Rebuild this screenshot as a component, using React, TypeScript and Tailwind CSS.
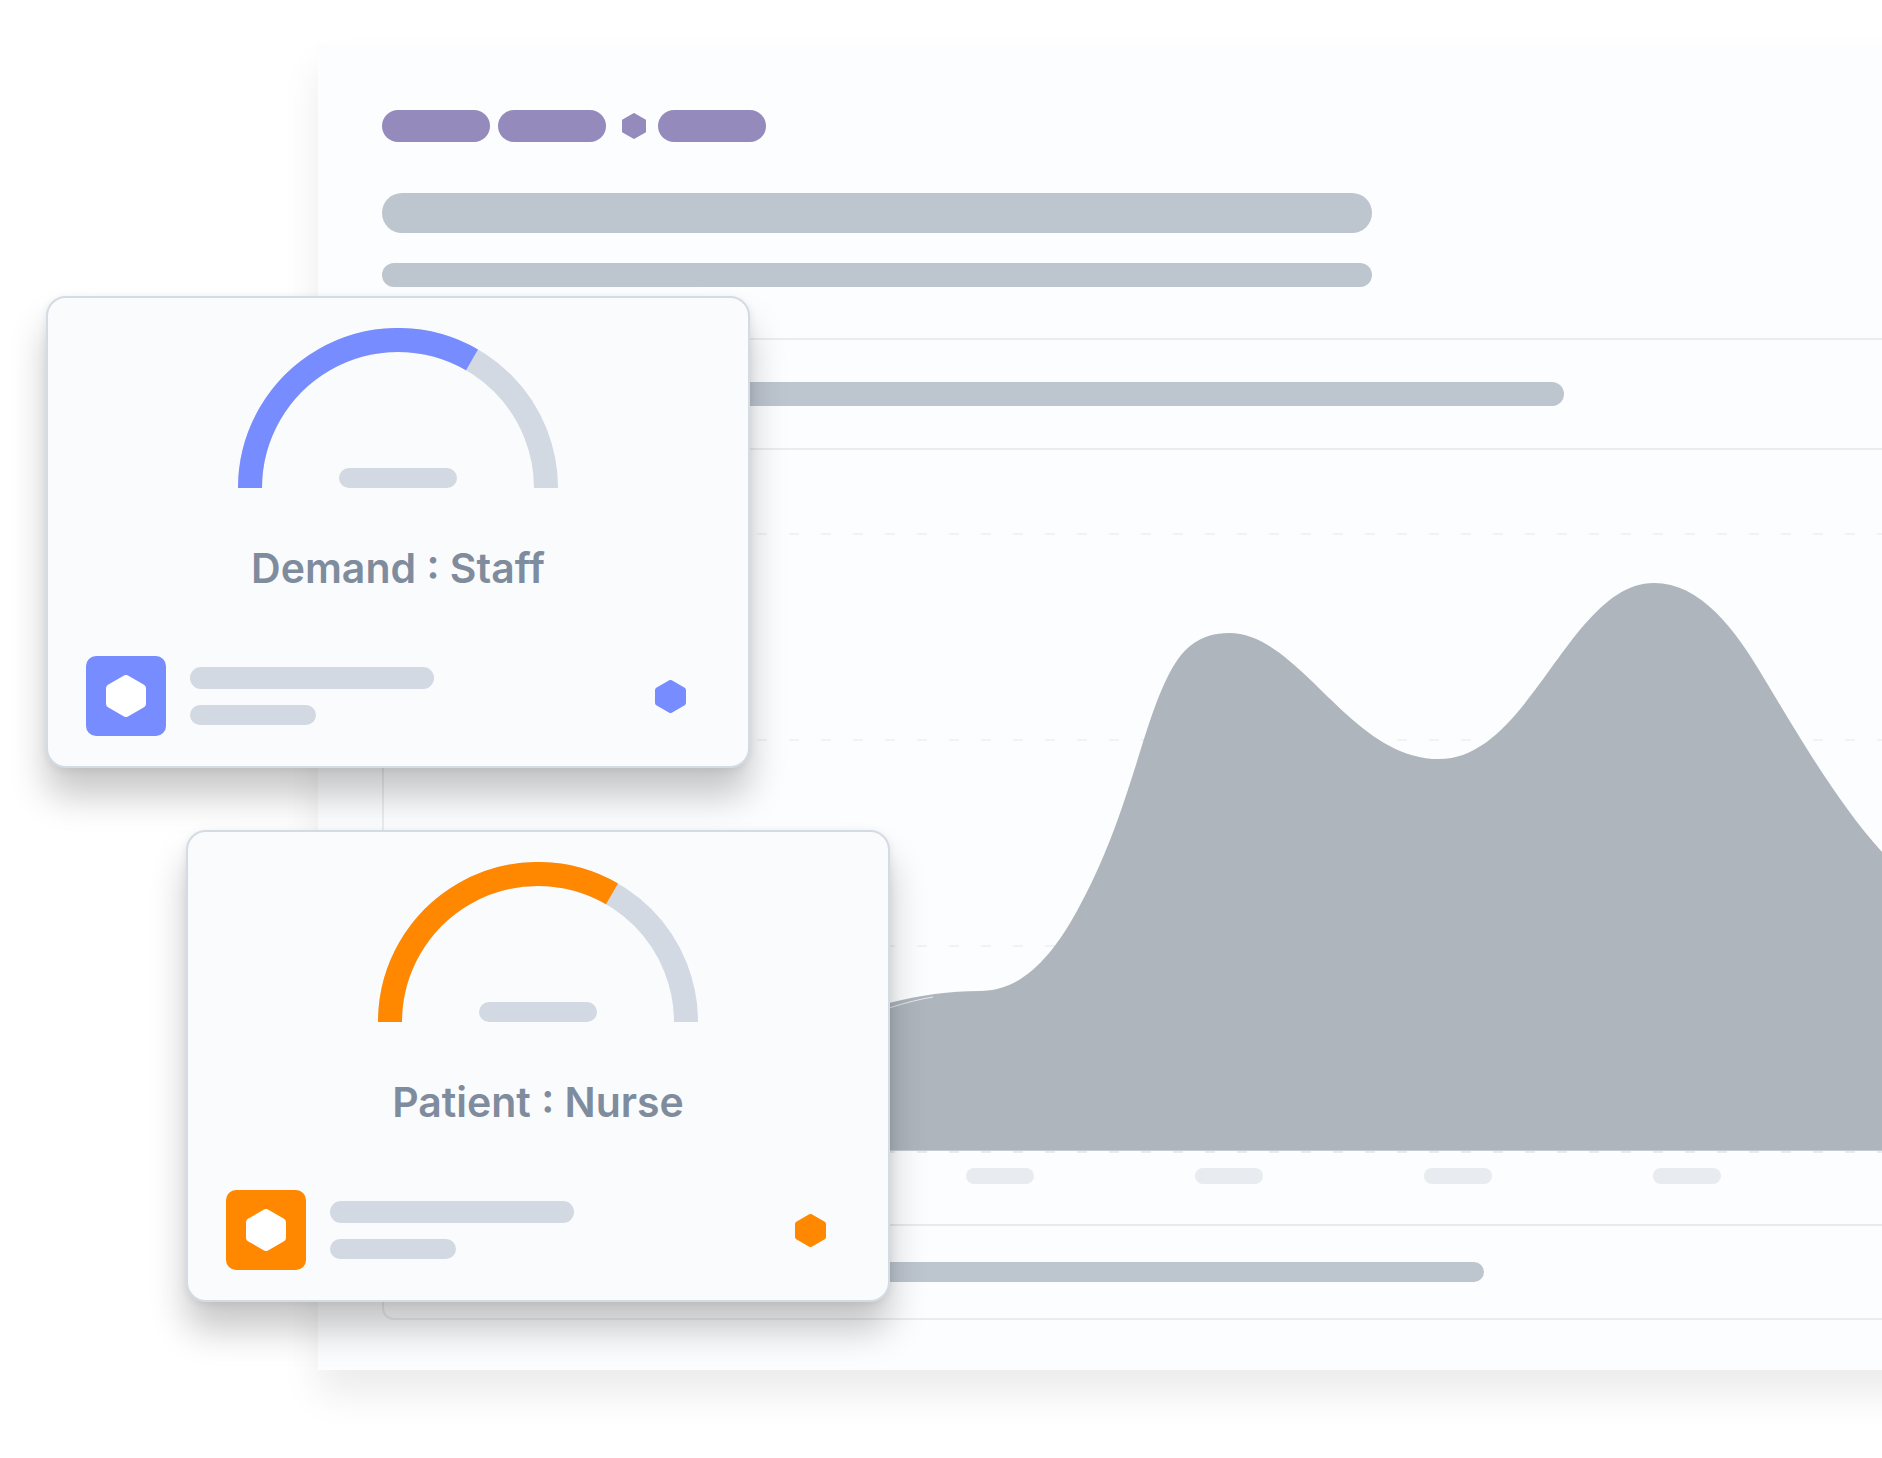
/* Dashboard illustration: skeleton report panel with two gauge cards on top */

// Regular pointy-top hexagon, corners rounded through the stroke width
const Hex = ({ w, h, fill, round, className }: { w: number; h: number; fill: string; round: number; className?: string }) => {
  const i = round / 2;
  const shoulder = i + (w / 2 - i) * 0.577;
  const points = `${w / 2},${i} ${w - i},${shoulder} ${w - i},${h - shoulder} ${w / 2},${h - i} ${i},${h - shoulder} ${i},${shoulder}`;
  return (
    <svg className={className} width={w} height={h} viewBox={`0 0 ${w} ${h}`} fill={fill}>
      <polygon points={points} stroke={fill} strokeWidth={round} strokeLinejoin="round" />
    </svg>
  );
};

const GaugeCard = ({
  title,
  color,
  iconBg,
  className,
}: {
  title: string;
  color: string;
  iconBg: string;
  className: string;
}) => (
  <div
    className={`absolute w-[704px] h-[472px] rounded-[20px] border-2 border-[#d3dbe5] bg-[#fafbfd] shadow-[0_28px_36px_rgba(0,0,0,0.22),0_2px_8px_rgba(0,0,0,0.08)] flex flex-col items-center pt-[30px] ${className}`}
  >
    <div className="relative w-[320px] h-[160px]">
      <svg className="w-[320px] h-[160px]" viewBox="0 0 320 160" fill="none">
        <path d="M12 160A148 148 0 0 1 308 160" stroke="#d2d9e2" strokeWidth="24" />
        <path d="M12 160A148 148 0 0 1 234 31.8" stroke={color} strokeWidth="24" />
      </svg>
      <div className="absolute left-[101px] bottom-0 w-[118px] h-[20px] rounded-full bg-[#d2d9e2]" />
    </div>
    <div className="mt-[50px] h-[60px] leading-[60px] text-[41px] font-semibold text-[#7f8c9d] [font-family:Inter,sans-serif]">
      {title}
    </div>
    <div className="mt-[58px] w-full pl-[38px] pr-[62px] flex items-center">
      <div className={`w-[80px] h-[80px] rounded-[10px] flex items-center justify-center ${iconBg}`}>
        <Hex w={40} h={42} fill="#ffffff" round={8} />
      </div>
      <div className="ml-[24px] h-[80px] pt-[11px] flex flex-col gap-[16px]">
        <div className="w-[244px] h-[22px] rounded-full bg-[#d2d9e2]" />
        <div className="w-[126px] h-[20px] rounded-full bg-[#d2d9e2]" />
      </div>
      <Hex className="ml-auto" w={31} h={33} fill={color} round={5} />
    </div>
  </div>
);

export default function App() {
  const dashes = [534, 740, 946, 1152];

  return (
    <div className="relative w-[1882px] h-[1458px] overflow-hidden bg-white">
      {/* Report panel */}
      <div className="ml-[318px] pt-[45px]">
        <div className="w-[1700px] h-[1325px] bg-[#fcfdfe] pt-[65px] pl-[64px] shadow-[0_24px_36px_rgba(0,0,0,0.08)]">
          <div className="flex items-center h-[32px]">
            <div className="w-[108px] h-[32px] rounded-full bg-[#948abc]" />
            <div className="ml-[8px] w-[108px] h-[32px] rounded-full bg-[#948abc]" />
            <Hex className="ml-[16px]" w={24} h={26} fill="#948abc" round={2} />
            <div className="ml-[12px] w-[108px] h-[32px] rounded-full bg-[#948abc]" />
          </div>
          <div className="mt-[51px] w-[990px] h-[40px] rounded-full bg-[#bdc5cf]" />
          <div className="mt-[30px] w-[990px] h-[24px] rounded-full bg-[#bdc5cf]" />

          {/* Chart box */}
          <div className="mt-[51px] h-[982px] border-t-2 border-l-2 border-b-2 border-[#e9edf1] rounded-bl-[12px]">
            <div className="h-[110px] pt-[42px] border-b-2 border-[#e9edf1]">
              <div className="w-[1180px] h-[24px] rounded-full bg-[#bdc5cf]" />
            </div>
            <svg className="block w-[1498px] h-[703px]" viewBox="384 450 1498 703" fill="none">
              {dashes.map((y) => (
                <line
                  key={y}
                  x1="384"
                  x2="1882"
                  y1={y}
                  y2={y}
                  stroke={y === 1152 ? '#e8ebef' : '#f0f2f5'}
                  strokeWidth="2"
                  strokeDasharray="10 22"
                  strokeDashoffset="11"
                />
              ))}
              <path
                d="M384 1150V1100C600 1080 780 1030 889 1003C920 995 950 991 980 991C1020 991 1050 960 1077 911C1105 860 1120 815 1135 768C1148 727 1165 665 1190 646C1203 636 1215 633 1229 633C1300 633 1350 759 1439 759C1530 759 1570 583 1654 583C1700 583 1735 628 1765 680C1793 726 1835 800 1882 852V1150Z"
                fill="#aeb5bd"
              />
              <path d="M889 1008C905 1003 920 999 933 997" stroke="#ffffff" strokeOpacity="0.7" />
              <line x1="384" x2="1882" y1="1150.5" y2="1150.5" stroke="#c5cad3" />
            </svg>
            <div className="h-[73px] pt-[15px] pl-[582px] flex gap-[161px] border-b-2 border-[#e8e9f1]">
              <div className="w-[68px] h-[16px] rounded-full bg-[#e8ebef]" />
              <div className="w-[68px] h-[16px] rounded-full bg-[#e8ebef]" />
              <div className="w-[68px] h-[16px] rounded-full bg-[#e8ebef]" />
              <div className="w-[68px] h-[16px] rounded-full bg-[#e8ebef]" />
            </div>
            <div className="pt-[36px]">
              <div className="w-[1100px] h-[20px] rounded-full bg-[#bdc5cf]" />
            </div>
          </div>
        </div>
      </div>

      {/* Floating cards */}
      <GaugeCard
        title="Demand : Staff"
        color="#778cff"
        iconBg="bg-[#778cff]"
        className="left-[46px] top-[296px]"
      />
      <GaugeCard
        title="Patient : Nurse"
        color="#ff8800"
        iconBg="bg-[#ff8800]"
        className="left-[186px] top-[830px]"
      />
    </div>
  );
}
